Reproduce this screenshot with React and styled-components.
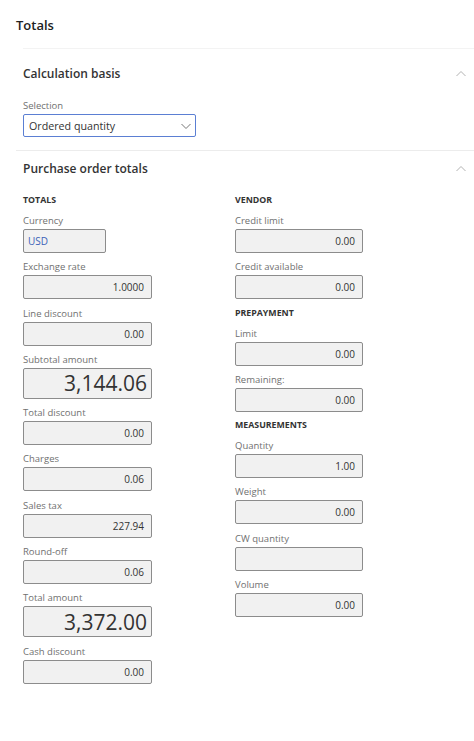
import React from "react";
import styled, { createGlobalStyle } from "styled-components";

const Global = createGlobalStyle`
  html, body { margin: 0; padding: 0; background: #ffffff; }
  body { font-family: "Open Sans", "Noto Sans", sans-serif; color: #333; }
  * { box-sizing: border-box; }
`;

const Page = styled.div`
  width: 474px;
  min-height: 741px;
  background: #fff;
`;

const Title = styled.h1`
  margin: 0;
  padding: 16px 16px 0;
  font-size: 13px;
  line-height: 18px;
  font-weight: 600;
  color: #222;
`;

const TitleRule = styled.div`
  margin: 14px 0 0 23px;
  height: 1px;
  background: #f3f3f3;
`;

const Section = styled.section`
  padding: ${(p) => p.$pad};
`;

const SectionHeader = styled.div`
  display: flex;
  align-items: center;
  justify-content: space-between;
  padding: 0 7px 0 23px;
  height: 18px;
`;

const SectionTitle = styled.h2`
  margin: 0;
  font-size: 12px;
  line-height: 18px;
  font-weight: 600;
  color: #333;
`;

const Divider = styled.div`
  margin-left: 16px;
  height: 1px;
  background: #ececec;
`;

const SectionBody = styled.div`
  padding: ${(p) => p.$top || 16}px 0 0 23px;
`;

const Label = styled.div`
  font-size: 9.5px;
  line-height: 14px;
  color: #707070;
  white-space: nowrap;
`;

const SelectBox = styled.div`
  margin-top: 1px;
  width: 173px;
  height: 23px;
  border: 1px solid #5b7fd3;
  border-radius: 2px;
  display: flex;
  align-items: center;
  justify-content: space-between;
  padding: 0 3px 0 5px;
  font-size: 10.7px;
  color: #333;
  background: #fff;
`;

const Columns = styled.div`
  display: grid;
  grid-template-columns: 212px 1fr;
`;

const Column = styled.div`
  display: flex;
  flex-direction: column;
`;

const GroupTitle = styled.div`
  font-size: 8.8px;
  line-height: 12px;
  font-weight: 700;
  color: #333;
  margin-bottom: 8px;
`;

const Field = styled.div`
  display: flex;
  flex-direction: column;
  margin-bottom: 7.3px;
`;

const Box = styled.div`
  margin-top: 1px;
  width: ${(p) => p.$w || 129}px;
  height: ${(p) => (p.$big ? 31 : 24)}px;
  background: #f1f1f1;
  border: 1px solid #8c8c8c;
  border-radius: 2px;
  display: flex;
  align-items: center;
  justify-content: ${(p) => (p.$left ? "flex-start" : "flex-end")};
  padding: ${(p) => (p.$left ? "0 0 0 4px" : p.$big ? "0 4px 0 0" : "0 7px 0 0")};
  font-size: ${(p) => (p.$big ? "21px" : "10px")};
  color: ${(p) => (p.$blue ? "#3b62b8" : "#333")};
`;

const Chevron = ({ up, color = "#b3b3b3", size = 12 }) => (
  <svg width={size} height={size} viewBox="0 0 12 12" fill="none">
    <path
      d={up ? "M1.5 8 L6 3.5 L10.5 8" : "M1.5 4 L6 8.5 L10.5 4"}
      stroke={color}
      strokeWidth="1"
    />
  </svg>
);

const F = ({ label, value, big, w, left, blue }) => (
  <Field>
    <Label>{label}</Label>
    <Box $big={big} $w={w} $left={left} $blue={blue}>
      {value}
    </Box>
  </Field>
);

export default function App() {
  return (
    <Page>
      <Global />
      <Title>Totals</Title>
      <TitleRule />
      <Section $pad="16px 0 13px">
        <SectionHeader>
          <SectionTitle>Calculation basis</SectionTitle>
          <Chevron up />
        </SectionHeader>
        <SectionBody>
          <Label>Selection</Label>
          <SelectBox>
            <span>Ordered quantity</span>
            <Chevron color="#777" />
          </SelectBox>
        </SectionBody>
      </Section>
      <Divider />
      <Section $pad="9px 0 0">
        <SectionHeader>
          <SectionTitle>Purchase order totals</SectionTitle>
          <Chevron up />
        </SectionHeader>
        <SectionBody>
          <Columns>
            <Column>
              <GroupTitle>TOTALS</GroupTitle>
              <F label="Currency" value="USD" w={83} left blue />
              <F label="Exchange rate" value="1.0000" />
              <F label="Line discount" value="0.00" />
              <F label="Subtotal amount" value="3,144.06" big />
              <F label="Total discount" value="0.00" />
              <F label="Charges" value="0.06" />
              <F label="Sales tax" value="227.94" />
              <F label="Round-off" value="0.06" />
              <F label="Total amount" value="3,372.00" big />
              <F label="Cash discount" value="0.00" />
            </Column>
            <Column>
              <GroupTitle>VENDOR</GroupTitle>
              <F label="Credit limit" value="0.00" w={128} />
              <F label="Credit available" value="0.00" w={128} />
              <GroupTitle>PREPAYMENT</GroupTitle>
              <F label="Limit" value="0.00" w={128} />
              <F label="Remaining:" value="0.00" w={128} />
              <GroupTitle>MEASUREMENTS</GroupTitle>
              <F label="Quantity" value="1.00" w={128} />
              <F label="Weight" value="0.00" w={128} />
              <F label="CW quantity" value="" w={128} />
              <F label="Volume" value="0.00" w={128} />
            </Column>
          </Columns>
        </SectionBody>
      </Section>
    </Page>
  );
}
